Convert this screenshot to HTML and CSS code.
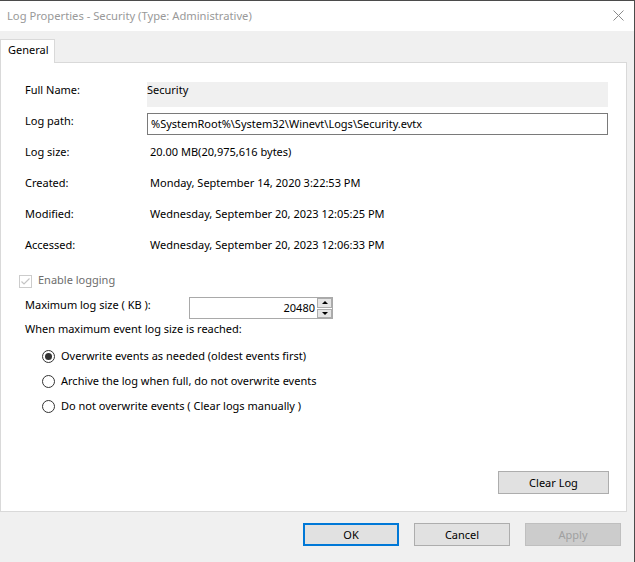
FILE: index.html
```html
<!DOCTYPE html>
<html>
<head>
<meta charset="utf-8">
<link rel="stylesheet" href="styles.css">
</head>
<body>
<div class="window">
  <div class="titlebar">
    <span class="title">Log Properties - Security (Type: Administrative)</span>
    <svg class="close" width="11" height="11" viewBox="0 0 11 11"><path d="M0.5 0.5 L10.5 10.5 M10.5 0.5 L0.5 10.5" stroke="#8a8a8a" stroke-width="1" fill="none"/></svg>
  </div>
  <div class="main">
    <div class="tabs"><div class="tab">General</div></div>
    <div class="panel">
      <div class="fields">
        <div class="row r-name"><div class="label">Full Name:</div><div class="value readonly">Security</div></div>
        <div class="row r-path"><div class="label">Log path:</div><div class="value textbox">%SystemRoot%\System32\Winevt\Logs\Security.evtx</div></div>
        <div class="row r-text r-size"><div class="label">Log size:</div><div class="value plain">20.00 MB(20,975,616 bytes)</div></div>
        <div class="row r-text r-created"><div class="label">Created:</div><div class="value plain">Monday, September 14, 2020 3:22:53 PM</div></div>
        <div class="row r-text r-modified"><div class="label">Modified:</div><div class="value plain">Wednesday, September 20, 2023 12:05:25 PM</div></div>
        <div class="row r-text r-accessed"><div class="label">Accessed:</div><div class="value plain">Wednesday, September 20, 2023 12:06:33 PM</div></div>
      </div>
      <div class="check-row">
        <span class="checkbox"><svg width="11" height="11" viewBox="0 0 11 11"><path d="M1.5 5.5 L4 8 L9.5 2.5" stroke="#c4c4c4" stroke-width="1.2" fill="none"/></svg></span>
        <span class="disabled-text">Enable logging</span>
      </div>
      <div class="size-row">
        <div class="size-label">Maximum log size ( KB ):</div>
        <div class="spin">
          <div class="spin-value">20480</div>
          <div class="spin-buttons">
            <div class="spin-btn"><span class="arrow-up"></span></div>
            <div class="spin-btn"><span class="arrow-down"></span></div>
          </div>
        </div>
      </div>
      <div class="when">When maximum event log size is reached:</div>
      <div class="radios">
        <div class="radio-row"><span class="radio checked"></span><span>Overwrite events as needed (oldest events first)</span></div>
        <div class="radio-row"><span class="radio"></span><span>Archive the log when full, do not overwrite events</span></div>
        <div class="radio-row"><span class="radio"></span><span>Do not overwrite events ( Clear logs manually )</span></div>
      </div>
      <div class="clear-row"><div class="btn clear-btn">Clear Log</div></div>
    </div>
    <div class="footer">
      <div class="btn default">OK</div>
      <div class="btn">Cancel</div>
      <div class="btn disabled">Apply</div>
    </div>
  </div>
</div>
</body>
</html>
```

FILE: styles.css
```css
* { box-sizing: border-box; }
html, body { margin: 0; padding: 0; }
body {
  width: 635px;
  height: 562px;
  overflow: hidden;
  background: #4b4b4b;
  font-family: "Noto Sans", "Open Sans", sans-serif;
  font-size: 11px;
  line-height: 16px;
  color: #000;
}
.window {
  margin-top: 1px;
  width: 634px;
  height: 561px;
  background: #f0f0f0;
  display: flex;
  flex-direction: column;
}
.titlebar {
  height: 30px;
  background: #fff;
  display: flex;
  align-items: center;
  justify-content: space-between;
  padding: 0 10px 1px 7px;
  color: #999;
}
.title { font-size: 11.2px; }
.close { display: block; }
.main {
  flex: 1;
  display: flex;
  flex-direction: column;
  padding-top: 8px;
}
.tabs { display: flex; height: 23px; }
.tab {
  position: relative;
  z-index: 1;
  width: 55px;
  height: 24px;
  background: #fff;
  border: 1px solid #d9d9d9;
  border-bottom: none;
  padding: 2px 0 0 7px;
}
.panel {
  width: 627px;
  height: 450px;
  background: #fff;
  border: 1px solid #d9d9d9;
  display: flex;
  flex-direction: column;
}
.fields { margin-top: 19px; padding-left: 24px; }
.row { display: flex; align-items: flex-start; }
.label { width: 122px; flex: none; }
.value { width: 461px; }
.r-name { height: 25px; }
.readonly { height: 25px; background: #f0f0f0; }
.r-path { margin-top: 6px; height: 22px; }
.textbox {
  height: 22px;
  border: 1px solid #7a7a7a;
  padding: 2px 0 0 3px;
}
.plain { padding-left: 3px; }
.r-text { height: 16px; }
.r-size { margin-top: 9px; }
.r-created { margin-top: 15px; }
.r-modified { margin-top: 15px; }
.r-accessed { margin-top: 15px; }

.check-row {
  margin-top: 19px;
  padding-left: 18px;
  display: flex;
  align-items: center;
  height: 16px;
}
.checkbox {
  width: 13px;
  height: 13px;
  border: 1px solid #cccccc;
  display: flex;
  align-items: center;
  justify-content: center;
  margin-right: 6px;
  margin-top: 2px;
}
.checkbox svg { display: block; }
.disabled-text { color: #6d6d6d; }

.size-row {
  margin-top: 9px;
  padding-left: 24px;
  display: flex;
  align-items: flex-start;
}
.size-label { width: 164px; flex: none; }
.spin {
  width: 144px;
  height: 22px;
  border: 1px solid #a9a9a9;
  display: flex;
}
.spin-value {
  flex: 1;
  text-align: right;
  padding: 2px 2px 0 0;
}
.spin-buttons {
  width: 15px;
  display: flex;
  flex-direction: column;
  gap: 1px;
}
.spin-btn {
  flex: 1;
  background: #e5e5e5;
  border: 1px solid #acacac;
  display: flex;
  align-items: center;
  justify-content: center;
}
.arrow-up, .arrow-down {
  width: 0; height: 0;
  border-left: 3px solid transparent;
  border-right: 3px solid transparent;
}
.arrow-up { border-bottom: 3px solid #000; }
.arrow-down { border-top: 3px solid #000; }

.when { margin-top: 2px; padding-left: 24px; }
.radios { margin-top: 11px; padding-left: 41px; display: flex; flex-direction: column; gap: 9px; }
.radio-row { display: flex; align-items: center; height: 16px; }
.radio {
  width: 13px;
  height: 13px;
  border: 1px solid #333;
  border-radius: 50%;
  margin-right: 6px;
  display: flex;
  align-items: center;
  justify-content: center;
}
.radio.checked::after {
  content: "";
  width: 7px;
  height: 7px;
  border-radius: 50%;
  background: #333;
}

.btn {
  height: 23px;
  background: #e1e1e1;
  border: 1px solid #adadad;
  display: flex;
  align-items: center;
  justify-content: center;
  width: 96px;
}
.clear-row {
  margin-top: auto;
  padding: 0 17px 17px 0;
  display: flex;
  justify-content: flex-end;
}
.clear-btn { width: 111px; }
.footer {
  margin-top: 11px;
  display: flex;
  justify-content: flex-end;
  gap: 15px;
  padding-right: 13px;
}
.btn.default { border: 2px solid #0078d7; }
.btn.disabled { background: #cccccc; border-color: #bfbfbf; color: #a0a0a0; }
```
